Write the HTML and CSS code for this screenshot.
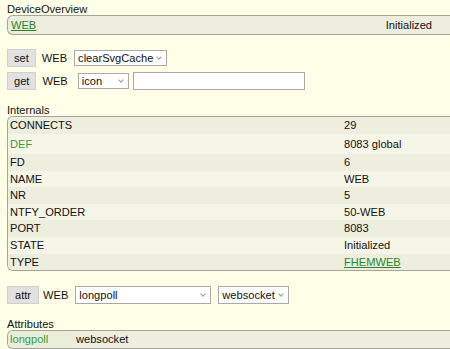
FILE: index.html
```html
<!DOCTYPE html>
<html lang="en">
<head>
  <meta charset="UTF-8">
  <title>WEB - FHEM</title>
  <link rel="stylesheet" href="styles.css">
</head>
<body>
  <div class="page">
    <!-- Device overview -->
    <div class="caption">DeviceOverview</div>
    <div class="block overview">
      <a href="#">WEB</a>
      <span class="state">Initialized</span>
    </div>

    <!-- set / get -->
    <div class="cmd cmd-set">
      <button>set</button>
      <span class="dev">WEB</span>
      <label class="select sel-set">
        <select><option>clearSvgCache</option></select>
      </label>
    </div>
    <div class="cmd cmd-get">
      <button>get</button>
      <span class="dev">WEB</span>
      <label class="select sel-get">
        <select><option>icon</option></select>
      </label>
      <input type="text" class="arg">
    </div>

    <!-- Internals -->
    <div class="caption caption-gap">Internals</div>
    <div class="block internals">
      <div class="row dark"><span class="name">CONNECTS</span><span class="val">29</span></div>
      <div class="row light tall"><span class="name link">DEF</span><span class="val">8083 global</span></div>
      <div class="row dark"><span class="name">FD</span><span class="val">6</span></div>
      <div class="row light"><span class="name">NAME</span><span class="val">WEB</span></div>
      <div class="row dark"><span class="name">NR</span><span class="val">5</span></div>
      <div class="row light"><span class="name">NTFY_ORDER</span><span class="val">50-WEB</span></div>
      <div class="row dark"><span class="name">PORT</span><span class="val">8083</span></div>
      <div class="row light"><span class="name">STATE</span><span class="val">Initialized</span></div>
      <div class="row dark"><span class="name">TYPE</span><span class="val"><a href="#">FHEMWEB</a></span></div>
    </div>

    <!-- attr -->
    <div class="cmd cmd-attr">
      <button class="btn-attr">attr</button>
      <span class="dev">WEB</span>
      <label class="select sel-attr">
        <select><option>longpoll</option></select>
      </label>
      <label class="select sel-value">
        <select><option>websocket</option></select>
      </label>
    </div>

    <!-- Attributes -->
    <div class="caption caption-gap">Attributes</div>
    <div class="block attributes">
      <div class="attr-row">
        <span class="attr-name">longpoll</span>
        <span class="attr-val">websocket</span>
      </div>
    </div>
  </div>
</body>
</html>
```

FILE: styles.css
```css
html, body {
  margin: 0;
  padding: 0;
  overflow: hidden;
}
body {
  background-color: #FFFFE7;
  font-family: "Liberation Sans", Arial, sans-serif;
  font-size: 11.1px;
  color: #111;
}
a {
  color: #278727;
}
.page {
  padding: 3px 0 0 7px;
}
.caption {
  height: 12px;
  line-height: 12px;
}
.caption-gap {
  margin-top: 14px;
}
/* blocks run on past the right edge of the window, so only the left side shows */
.block {
  box-sizing: border-box;
  width: 443px;
  border: 1px solid #a4a49a;
  border-right: none;
  border-radius: 6px 0 0 6px;
  background-color: #EEEEDF;
  overflow: hidden;
}
/* Overview */
.overview {
  height: 20px;
  display: flex;
  align-items: center;
  justify-content: space-between;
  padding: 0 18px 0 3px;
}
/* Command rows */
.cmd {
  display: flex;
  align-items: center;
  height: 18px;
  margin-top: 5px;
}
.cmd-set {
  margin-top: 14px;
}
.cmd-attr {
  margin-top: 15px;
}
button {
  box-sizing: border-box;
  height: 18px;
  padding: 0 6px;
  border: 1px solid #cfcfcf;
  background-color: #e1e1e1;
  color: #111;
  font-family: inherit;
  font-size: 11.1px;
}
.btn-attr {
  padding: 0 7px;
}
.dev {
  margin: 0 7px 0 6px;
}
.cmd-attr .dev {
  margin: 0 7px 0 4px;
}
.select {
  position: relative;
  display: block;
}
.select select {
  box-sizing: border-box;
  appearance: none;
  -webkit-appearance: none;
  width: 100%;
  height: 16px;
  padding: 0 0 0 3px;
  border: 1px solid #a9a9a9;
  border-radius: 0;
  background-color: #fff;
  color: #111;
  font-family: inherit;
  font-size: 11.1px;
  outline: none;
}
.select::after {
  content: "";
  position: absolute;
  top: 5px;
  right: 6px;
  width: 3px;
  height: 3px;
  border-right: 1px solid #9a9a9a;
  border-bottom: 1px solid #9a9a9a;
  transform: rotate(45deg);
  pointer-events: none;
}
.sel-set {
  width: 93px;
}
.sel-get {
  width: 51px;
  margin-left: 3px;
}
.arg {
  box-sizing: border-box;
  width: 172px;
  height: 18px;
  margin: 0 0 0 4px;
  border: 1px solid #a9a9a9;
  background-color: #fff;
}
.sel-attr {
  width: 136px;
}
.sel-value {
  width: 71px;
  margin-left: 7px;
}
.sel-attr select,
.sel-value select {
  height: 18px;
}
.sel-attr::after,
.sel-value::after {
  top: 6px;
}
/* Internals */
.row {
  display: flex;
  line-height: 16.6px;
}
.row.tall {
  line-height: 20.5px;
}
.row.dark {
  background-color: #EEEEDF;
}
.row.light {
  background-color: #F6F6E8;
}
.name {
  width: 334px;
  padding-left: 2px;
  box-sizing: border-box;
}
.name.link {
  color: #3c9b3c;
}
.val {
  padding-left: 2px;
}
/* Attributes */
.attr-row {
  display: flex;
  line-height: 17px;
}
.attr-name {
  width: 65px;
  padding-left: 2px;
  box-sizing: border-box;
  color: #3c9b3c;
  background-color: #E9EEDB;
}
.attr-val {
  padding-left: 3px;
}
```
